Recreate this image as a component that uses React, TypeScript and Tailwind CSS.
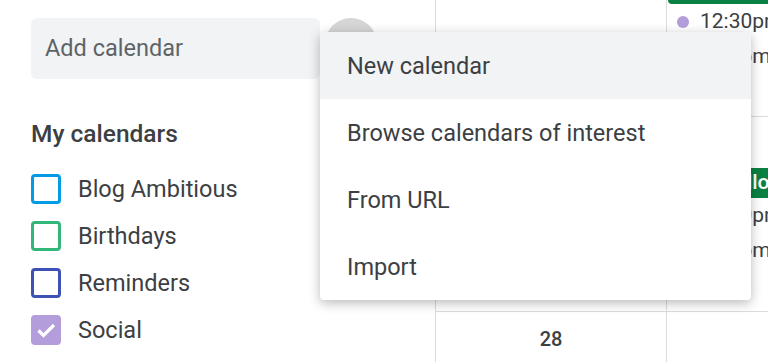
import React from 'react';

const calendars = [
  { name: 'Blog Ambitious', color: '#039be5', checked: false },
  { name: 'Birthdays', color: '#33b679', checked: false },
  { name: 'Reminders', color: '#3f51b5', checked: false },
  { name: 'Social', color: '#b39ddb', checked: true },
];

const menuItems = ['New calendar', 'Browse calendars of interest', 'From URL', 'Import'];

const EventLine: React.FC<{ time: string; title: string }> = ({ time, title }) => (
  <div className="h-[35px] shrink-0 flex items-center pl-[10px] whitespace-nowrap text-[21px] text-[#3c4043]">
    <span className="w-[12px] h-[12px] rounded-full bg-[#b39ddb] shrink-0" />
    <span className="ml-[11px]">{time} {title}</span>
  </div>
);

const App: React.FC = () => {
  return (
    <div className="relative flex h-[362px] w-[768px] overflow-hidden bg-white font-['Roboto',sans-serif]">
      {/* Sidebar */}
      <div className="w-[435px] shrink-0 pl-[31px] pt-[18px]">
        <div className="flex items-start gap-[5px]">
          <div className="flex h-[61px] w-[289px] items-center rounded-[6px] bg-[#f1f3f4] pl-[14px] text-[23.5px] text-[#5f6368]">
            Add calendar
          </div>
          <div className="h-[52px] w-[52px] rounded-full bg-[#d6d6d6]" />
        </div>

        <div className="mt-[40px] h-[30px] leading-[30px] text-[24.5px] font-medium text-[#3c4043]">My calendars</div>

        <div className="mt-[16px]">
          {calendars.map((c) => (
            <div key={c.name} className="flex h-[47px] items-center gap-[17px]">
              <span
                className="flex h-[30px] w-[30px] items-center justify-center rounded-[4px] border-[3px]"
                style={{ borderColor: c.color, backgroundColor: c.checked ? c.color : 'transparent' }}
              >
                {c.checked && (
                  <svg width="26" height="26" viewBox="0 0 24 24" fill="none">
                    <path d="M4.5 12.5l5 5L20 7" stroke="white" strokeWidth="3.2" />
                  </svg>
                )}
              </span>
              <span className="pt-[2px] text-[23.5px] text-[#3c4043]">{c.name}</span>
            </div>
          ))}
        </div>
      </div>

      {/* Month grid */}
      <div className="flex flex-1 border-l border-[#dadce0]">
        <div className="flex w-[231px] shrink-0 flex-col border-r border-[#dadce0]">
          <div className="h-[117px] shrink-0 border-b border-[#dadce0]" />
          <div className="h-[195px] shrink-0 border-b border-[#dadce0]" />
          <div className="flex-1 pt-[15px] text-center text-[20px] leading-[24px] font-medium text-[#3c4043]">28</div>
        </div>

        <div className="flex min-w-0 flex-1 flex-col">
          <div className="flex h-[117px] shrink-0 flex-col justify-end overflow-hidden border-b border-[#dadce0] pb-[42px]">
            <div className="mx-[1px] h-[30px] shrink-0 rounded-[4px] bg-[#0b8043]" />
            <EventLine time="12:30pm" title="Lunch" />
            <EventLine time="5:30pm" title="Yoga" />
          </div>
          <div className="flex h-[195px] shrink-0 flex-col overflow-hidden border-b border-[#dadce0] pt-[51px]">
            <div className="mx-[1px] flex h-[30px] shrink-0 items-center whitespace-nowrap rounded-[4px] bg-[#0b8043] pl-[8px] text-[21px] font-medium text-white">
              Blog Follow-up
            </div>
            <EventLine time="12:30pm" title="Lunch" />
            <EventLine time="5:30pm" title="Yoga" />
          </div>
          <div className="flex-1" />
        </div>
      </div>

      {/* Add calendar menu */}
      <div className="absolute left-[320px] top-[32px] w-[431px] overflow-hidden rounded-[4px] bg-white shadow-[0_3px_12px_rgba(0,0,0,0.28)]">
        {menuItems.map((item, i) => (
          <div
            key={item}
            className={`flex h-[67px] items-center pl-[27px] pt-[2px] text-[23.5px] text-[#3c4043] ${i === 0 ? 'bg-[#f1f3f4]' : ''}`}
          >
            {item}
          </div>
        ))}
      </div>
    </div>
  );
};

export default App;
